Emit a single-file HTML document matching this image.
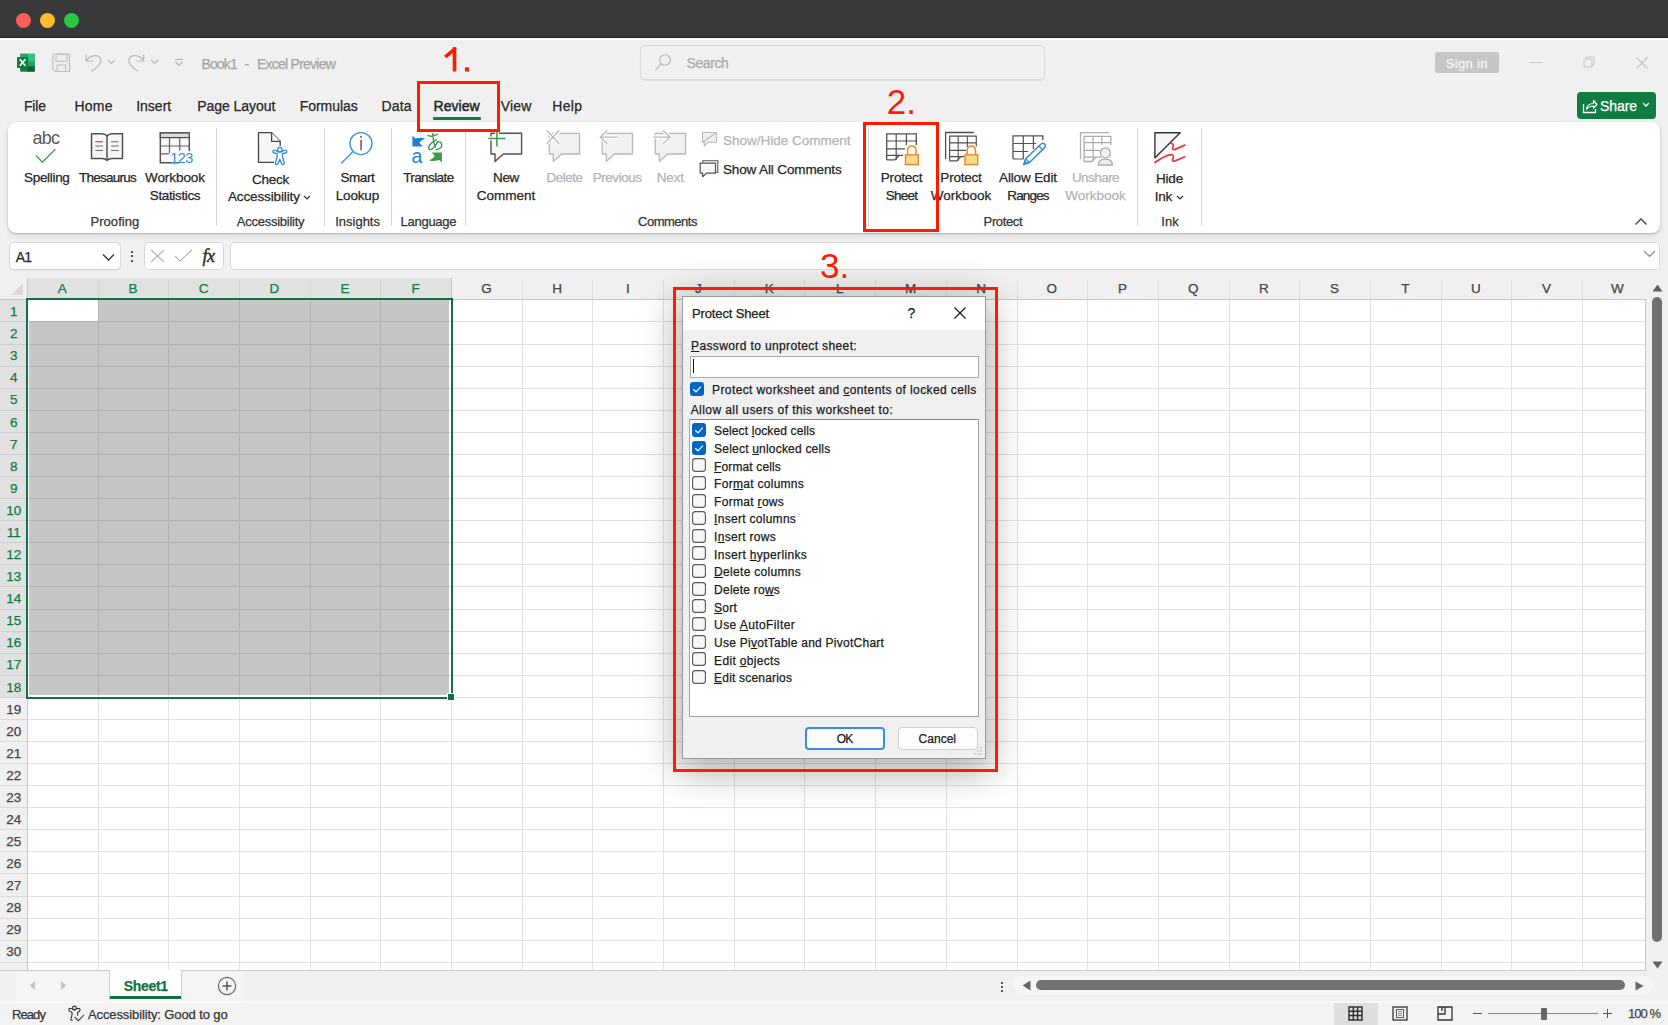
<!DOCTYPE html><html><head><meta charset="utf-8"><style>
html,body{margin:0;padding:0}
body{width:1668px;height:1025px;overflow:hidden;background:#f0f0f0;position:relative;font-family:"Liberation Sans",sans-serif;color:#262626}
.a{position:absolute}
.t{position:absolute;white-space:nowrap;line-height:1;-webkit-text-stroke:0.25px currentColor}
u{text-decoration:underline;text-underline-offset:1px}
</style></head><body>
<div class="a" style="left:0px;top:0px;width:1668px;height:38px;background:#38393b"></div>
<div class="a" style="left:0px;top:36.5px;width:1668px;height:1.5px;background:#222325"></div>
<div class="a" style="left:0px;top:38px;width:1668px;height:1.5px;background:#fcfcfc"></div>
<div class="a" style="left:15.5px;top:13.0px;width:15px;height:15px;background:#fe5f57;border-radius:50%"></div>
<div class="a" style="left:39.5px;top:13.0px;width:15px;height:15px;background:#febc2e;border-radius:50%"></div>
<div class="a" style="left:63.5px;top:13.0px;width:15px;height:15px;background:#28c840;border-radius:50%"></div>
<svg class="a" style="left:16px;top:53px;" width="20" height="20" viewBox="0 0 20 20">
<rect x="4.3" y="0.8" width="14.4" height="17.7" rx="0.8" fill="#1d8f56"/>
<rect x="11.5" y="0.8" width="7.2" height="8" fill="#33c481"/>
<rect x="4.3" y="0.8" width="7.2" height="4" fill="#21a366"/>
<rect x="11.5" y="8.8" width="7.2" height="5" fill="#21a366"/>
<rect x="4.3" y="13.5" width="14.4" height="5" rx="0.8" fill="#107c41"/>
<rect x="11.5" y="13.5" width="7.2" height="5" fill="#185c37"/>
<rect x="1" y="3.9" width="11.2" height="11.2" rx="0.9" fill="#107c41"/>
<path d="M3.8 6.3 L9.4 12.8 M9.4 6.3 L3.8 12.8" stroke="#fff" stroke-width="1.7"/>
</svg>
<svg class="a" style="left:52px;top:53px;" width="19" height="20" viewBox="0 0 19 20">
<path d="M0.8 1 H17.5 V18.5 H3.5 L0.8 15.8 Z" fill="none" stroke="#c0c0c0" stroke-width="1.2" stroke-linejoin="round"/>
<rect x="4" y="1" width="11" height="7.2" fill="none" stroke="#c0c0c0" stroke-width="1.1"/>
<rect x="5.2" y="12" width="8.4" height="6.5" fill="none" stroke="#c0c0c0" stroke-width="1.1"/>
</svg>
<svg class="a" style="left:85px;top:54px;" width="18" height="19" viewBox="0 0 18 19">
<path d="M1.1 0.2 V7 H8" fill="none" stroke="#b8b8b8" stroke-width="1.2"/>
<path d="M1.4 6.6 C5 1 15.9 -1 15.9 7 C15.9 10.5 13 13 6.2 17.4" fill="none" stroke="#b8b8b8" stroke-width="1.2"/>
</svg>
<svg class="a" style="left:107px;top:59px;" width="9" height="6" viewBox="0 0 9 6"><path d="M1 1 L4.5 4.5 L8 1" fill="none" stroke="#b8b8b8" stroke-width="1.1"/></svg>
<svg class="a" style="left:128px;top:54px;" width="18" height="19" viewBox="0 0 18 19">
<path d="M15.7 0.2 V7 H8.5" fill="none" stroke="#b8b8b8" stroke-width="1.2"/>
<path d="M15.4 6.6 C12 1 0.8 -1 0.8 7 C0.8 10.5 3.5 13 9.9 17.2" fill="none" stroke="#b8b8b8" stroke-width="1.2"/>
</svg>
<svg class="a" style="left:150px;top:59px;" width="9" height="6" viewBox="0 0 9 6"><path d="M1 1 L4.5 4.5 L8 1" fill="none" stroke="#b8b8b8" stroke-width="1.1"/></svg>
<svg class="a" style="left:174px;top:58px;" width="10" height="9" viewBox="0 0 10 9"><path d="M1 1.5 H9" stroke="#b4b4b4" stroke-width="1.1"/><path d="M1.5 4 L5 7.5 L8.5 4" fill="none" stroke="#b4b4b4" stroke-width="1.1"/></svg>
<div class="t" style="left:201.50px;top:56.65px;font-size:14px;color:#a4a4a4;letter-spacing:-0.878px;">Book1</div>
<div class="t" style="left:244.50px;top:56.65px;font-size:14px;color:#a4a4a4;">-</div>
<div class="t" style="left:257.00px;top:56.65px;font-size:14px;color:#a4a4a4;letter-spacing:-0.762px;">Excel Preview</div>
<div class="a" style="left:640px;top:45px;width:405px;height:35px;box-sizing:border-box;border:1px solid #d9d9d9;border-radius:5px;background:#f0f0f0;box-shadow:0 1px 1px rgba(0,0,0,0.08)"></div>
<svg class="a" style="left:654px;top:53px;" width="18" height="19" viewBox="0 0 18 19"><circle cx="11" cy="7" r="5.3" fill="none" stroke="#b8b8b8" stroke-width="1.1"/><path d="M7.2 10.8 L1.5 16.8" stroke="#b8b8b8" stroke-width="1.2"/></svg>
<div class="t" style="left:686.50px;top:56.15px;font-size:14px;color:#a9a9a9;letter-spacing:-0.391px;">Search</div>
<div class="a" style="left:1435px;top:52px;width:64px;height:21px;background:#c6c6c6;border-radius:2px"></div>
<div class="t" style="left:1445.80px;top:56.50px;font-size:13px;color:#f4f4f4;letter-spacing:0.319px;">Sign in</div>
<div class="a" style="left:1530px;top:62px;width:12px;height:1px;background:#c4c4c4"></div>
<svg class="a" style="left:1583px;top:56px;" width="13" height="13" viewBox="0 0 13 13"><rect x="1" y="3" width="8" height="8" rx="1" fill="none" stroke="#c4c4c4" stroke-width="1"/><path d="M3 3 V1.5 Q3 1 3.5 1 H10.5 Q11 1 11 1.5 V8.5 Q11 9 10.5 9 H9" fill="none" stroke="#c4c4c4" stroke-width="1"/></svg>
<svg class="a" style="left:1636px;top:57px;" width="12" height="12" viewBox="0 0 12 12"><path d="M0.5 0.5 L11.5 11.5 M11.5 0.5 L0.5 11.5" stroke="#c4c4c4" stroke-width="1.1"/></svg>
<div class="t" style="left:23.90px;top:99.25px;font-size:14px;color:#262626;letter-spacing:-0.137px;">File</div>
<div class="t" style="left:74.60px;top:99.25px;font-size:14px;color:#262626;letter-spacing:0.168px;">Home</div>
<div class="t" style="left:136.20px;top:99.25px;font-size:14px;color:#262626;">Insert</div>
<div class="t" style="left:197.30px;top:99.25px;font-size:14px;color:#262626;letter-spacing:-0.054px;">Page Layout</div>
<div class="t" style="left:299.70px;top:99.25px;font-size:14px;color:#262626;letter-spacing:-0.039px;">Formulas</div>
<div class="t" style="left:381.60px;top:99.25px;font-size:14px;color:#262626;letter-spacing:0.109px;">Data</div>
<div class="t" style="left:500.70px;top:99.25px;font-size:14px;color:#262626;letter-spacing:0.227px;">View</div>
<div class="t" style="left:552.30px;top:99.25px;font-size:14px;color:#262626;letter-spacing:0.305px;">Help</div>
<div class="t" style="left:433.60px;top:99.25px;font-size:14px;color:#262626;letter-spacing:0.018px;-webkit-text-stroke:0.45px #262626;">Review</div>
<div class="a" style="left:433px;top:117px;width:48px;height:2.5px;background:#107c41;border-radius:1px"></div>
<div class="a" style="left:1577px;top:92px;width:79px;height:27px;background:#107c41;border-radius:4px"></div>
<svg class="a" style="left:1582px;top:98px;" width="16" height="16" viewBox="0 0 16 16"><path d="M1.5 6 V14.5 H13.5 V11" fill="none" stroke="#fff" stroke-width="1.3"/><path d="M4.5 11.5 C5 7 8 5.5 11.5 5.5 V2.5 L15 6.5 L11.5 10 V8 C8.5 8 6.5 9 4.5 11.5 Z" fill="none" stroke="#fff" stroke-width="1.2" stroke-linejoin="round"/></svg>
<div class="t" style="left:1600.00px;top:99.15px;font-size:14px;color:#ffffff;letter-spacing:-0.069px;">Share</div>
<svg class="a" style="left:1642px;top:102px;" width="8" height="6" viewBox="0 0 8 6"><path d="M1 1 L4 4 L7 1" fill="none" stroke="#fff" stroke-width="1.3"/></svg>
<div class="a" style="left:8px;top:122px;width:1652px;height:111px;background:#fff;border-radius:8px;box-shadow:0 1px 2px rgba(0,0,0,0.2), 0 3px 6px rgba(0,0,0,0.08), 0 0 1px rgba(0,0,0,0.12)"></div>
<div class="a" style="left:216px;top:128px;width:1px;height:98px;background:#d6d6d6"></div>
<div class="a" style="left:324px;top:128px;width:1px;height:98px;background:#d6d6d6"></div>
<div class="a" style="left:391px;top:128px;width:1px;height:98px;background:#d6d6d6"></div>
<div class="a" style="left:465px;top:128px;width:1px;height:98px;background:#d6d6d6"></div>
<div class="a" style="left:868px;top:128px;width:1px;height:98px;background:#d6d6d6"></div>
<div class="a" style="left:1137px;top:128px;width:1px;height:98px;background:#d6d6d6"></div>
<div class="a" style="left:1201px;top:128px;width:1px;height:98px;background:#d6d6d6"></div>
<div class="t" style="left:24.00px;top:171.07px;font-size:13.5px;color:#262626;letter-spacing:-0.308px;">Spelling</div>
<div class="t" style="left:79.10px;top:171.07px;font-size:13.5px;color:#262626;letter-spacing:-0.759px;">Thesaurus</div>
<div class="t" style="left:145.00px;top:171.07px;font-size:13.5px;color:#262626;letter-spacing:-0.068px;">Workbook</div>
<div class="t" style="left:149.80px;top:188.97px;font-size:13.5px;color:#262626;letter-spacing:-0.362px;">Statistics</div>
<div class="t" style="left:252.00px;top:172.57px;font-size:13.5px;color:#262626;letter-spacing:-0.256px;">Check</div>
<div class="t" style="left:227.90px;top:189.87px;font-size:13.5px;color:#262626;letter-spacing:-0.118px;">Accessibility</div>
<svg class="a" style="left:303px;top:195px;" width="8" height="6" viewBox="0 0 8 6"><path d="M1 1 L4 4 L7 1" fill="none" stroke="#333" stroke-width="1.2"/></svg>
<div class="t" style="left:340.40px;top:171.07px;font-size:13.5px;color:#262626;letter-spacing:-0.403px;">Smart</div>
<div class="t" style="left:335.65px;top:188.97px;font-size:13.5px;color:#262626;letter-spacing:-0.138px;">Lookup</div>
<div class="t" style="left:403.15px;top:171.07px;font-size:13.5px;color:#262626;letter-spacing:-0.590px;">Translate</div>
<div class="t" style="left:493.00px;top:171.07px;font-size:13.5px;color:#262626;letter-spacing:-0.339px;">New</div>
<div class="t" style="left:476.70px;top:188.97px;font-size:13.5px;color:#262626;letter-spacing:0.008px;">Comment</div>
<div class="t" style="left:546.50px;top:171.07px;font-size:13.5px;color:#b3b3b3;letter-spacing:-0.508px;">Delete</div>
<div class="t" style="left:592.70px;top:171.07px;font-size:13.5px;color:#b3b3b3;letter-spacing:-0.443px;">Previous</div>
<div class="t" style="left:656.80px;top:171.07px;font-size:13.5px;color:#b3b3b3;letter-spacing:-0.191px;">Next</div>
<div class="t" style="left:722.90px;top:134.37px;font-size:13.5px;color:#b3b3b3;letter-spacing:0.011px;">Show/Hide Comment</div>
<div class="t" style="left:722.90px;top:163.07px;font-size:13.5px;color:#262626;letter-spacing:-0.125px;">Show All Comments</div>
<div class="t" style="left:880.75px;top:171.07px;font-size:13.5px;color:#262626;letter-spacing:-0.183px;">Protect</div>
<div class="t" style="left:885.85px;top:188.97px;font-size:13.5px;color:#262626;letter-spacing:-0.799px;">Sheet</div>
<div class="t" style="left:940.35px;top:171.07px;font-size:13.5px;color:#262626;letter-spacing:-0.212px;">Protect</div>
<div class="t" style="left:930.65px;top:188.97px;font-size:13.5px;color:#262626;letter-spacing:0.019px;">Workbook</div>
<div class="t" style="left:999.00px;top:171.07px;font-size:13.5px;color:#262626;letter-spacing:-0.128px;">Allow Edit</div>
<div class="t" style="left:1007.30px;top:188.97px;font-size:13.5px;color:#262626;letter-spacing:-0.860px;">Ranges</div>
<div class="t" style="left:1071.90px;top:171.07px;font-size:13.5px;color:#b3b3b3;letter-spacing:-0.552px;">Unshare</div>
<div class="t" style="left:1065.25px;top:188.97px;font-size:13.5px;color:#b3b3b3;letter-spacing:-0.006px;">Workbook</div>
<div class="t" style="left:1156.00px;top:171.87px;font-size:13.5px;color:#262626;letter-spacing:-0.195px;">Hide</div>
<div class="t" style="left:1154.80px;top:189.57px;font-size:13.5px;color:#262626;letter-spacing:-0.339px;">Ink</div>
<svg class="a" style="left:1176px;top:195px;" width="8" height="6" viewBox="0 0 8 6"><path d="M1 1 L4 4 L7 1" fill="none" stroke="#333" stroke-width="1.2"/></svg>
<div class="t" style="left:90.40px;top:214.60px;font-size:13px;color:#333;letter-spacing:0.070px;">Proofing</div>
<div class="t" style="left:236.85px;top:214.60px;font-size:13px;color:#333;letter-spacing:-0.255px;">Accessibility</div>
<div class="t" style="left:335.20px;top:214.60px;font-size:13px;color:#333;letter-spacing:-0.002px;">Insights</div>
<div class="t" style="left:400.50px;top:214.60px;font-size:13px;color:#333;letter-spacing:-0.259px;">Language</div>
<div class="t" style="left:638.00px;top:214.60px;font-size:13px;color:#333;letter-spacing:-0.482px;">Comments</div>
<div class="t" style="left:983.60px;top:214.60px;font-size:13px;color:#333;letter-spacing:-0.370px;">Protect</div>
<div class="t" style="left:1161.25px;top:214.60px;font-size:13px;color:#333;letter-spacing:0.052px;">Ink</div>
<svg class="a" style="left:1634px;top:216.5px;" width="14" height="9" viewBox="0 0 14 9"><path d="M1.5 7.5 L7 2 L12.5 7.5" fill="none" stroke="#444" stroke-width="1.4"/></svg>
<div class="t" style="left:32.5px;top:128.5px;font-size:18px;color:#5a5a5a;letter-spacing:-0.8px;-webkit-text-stroke:0">abc</div>
<svg class="a" style="left:33px;top:146px;" width="26" height="19" viewBox="0 0 26 19"><path d="M3 9.5 L9.4 16.2 L22.3 3.3" fill="none" stroke="#45a349" stroke-width="1.4"/></svg>
<svg class="a" style="left:89px;top:131px;" width="36" height="32" viewBox="0 0 36 32">
<path d="M16 6 H11 M22.5 14 " stroke="none"/>
<path d="M2.5 2.8 H13 Q16.5 2.8 18 5 Q19.5 2.8 23 2.8 H33.5 V27.5 H23 Q19.5 27.5 18 29.5 Q16.5 27.5 13 27.5 H2.5 Z" fill="#f6f6f6" stroke="#505050" stroke-width="1.5" stroke-linejoin="round"/>
<path d="M18 5 V29" stroke="#505050" stroke-width="1.5"/>
<path d="M6.4 10.7 H13.9" stroke="#e8353b" stroke-width="1.2"/>
<path d="M6.4 15 H13.9 M6.4 19.5 H13.9 M22 10.7 H29.5 M22 15 H29.5 M22 19.5 H29.5" stroke="#6a6a6a" stroke-width="1.1"/>
</svg>
<svg class="a" style="left:158px;top:131px;" width="36" height="34" viewBox="0 0 36 34">
<path d="M21 31.8 H2.3 V2 H31.3 V20" fill="#fafafa" stroke="#505050" stroke-width="1.4"/>
<rect x="2.3" y="2" width="29" height="4.6" fill="#dcdcdc" stroke="#505050" stroke-width="1.3"/>
<path d="M11.5 6.6 V22 M21.7 6.6 V19.5 M2.3 15 H31.3 M2.3 22.8 H11" stroke="#606060" stroke-width="1.2"/>
<text x="12.3" y="32" font-family="Liberation Sans" font-size="14.5" fill="#2e8fd8" letter-spacing="-0.6">123</text>
</svg>
<svg class="a" style="left:256px;top:131px;" width="34" height="36" viewBox="0 0 34 36">
<path d="M24.2 15 V10.3 L15.6 1.7 H2.5 V31.4 H18" fill="#f6f6f6" stroke="#444" stroke-width="1.3" stroke-linejoin="round"/>
<path d="M15.6 1.7 V10.3 H24.2" fill="#fff" stroke="#444" stroke-width="1.3" stroke-linejoin="round"/>
<path d="M21.2 22.6 L18 22 Q16.2 21.2 17.2 19.6 Q18.2 18.6 20 19.6 L21.6 20.6 Q23.8 21.6 26 20.6 L27.6 19.6 Q29.4 18.6 30.4 19.6 Q31.4 21.2 29.6 22 L26.4 22.6 L26.4 25.4 L28.2 32 Q28.4 33.6 26.9 33.6 Q25.9 33.6 25.5 32.4 L23.8 28.2 L22.1 32.4 Q21.7 33.6 20.7 33.6 Q19.2 33.6 19.4 32 L21.2 25.4 Z" fill="#fff" stroke="#2e8fd8" stroke-width="1.3" stroke-linejoin="round"/>
<circle cx="23.8" cy="18.6" r="2.2" fill="#fff" stroke="#2e8fd8" stroke-width="1.3"/>
</svg>
<svg class="a" style="left:338px;top:129px;" width="38" height="38" viewBox="0 0 38 38">
<circle cx="23" cy="14.6" r="11" fill="#fff" stroke="#3a96dd" stroke-width="1.4"/>
<path d="M15 22.6 L3.2 34.5" stroke="#3a96dd" stroke-width="1.4"/>
<rect x="22.4" y="10.8" width="1.3" height="10.4" fill="#444"/>
<circle cx="23" cy="7.9" r="0.9" fill="#444"/>
</svg>
<svg class="a" style="left:410px;top:131px;" width="36" height="34" viewBox="0 0 36 34">
<path d="M2.4 4.8 L2.4 15.4 L12.8 15.4 Q10.2 13.4 9.4 11.6 Q11 9.2 15.1 7.4 Q10 6.2 5.5 7.6 Z" fill="#1e83d4"/>
<text x="1.6" y="31.8" font-family="Liberation Sans" font-size="19.5" fill="#1e83d4">a</text>
<path d="M21.6 21.4 L31.9 21.4 L31.9 31.8 Q30.5 29.6 29 29 Q24 31 19.2 29.4 Q23.6 27.6 24.7 25.1 Q23.4 22.8 21.6 21.4 Z" fill="#3a9b48"/>
<path d="M17.9 4.2 Q19.5 5.6 22 5 Q25 4.2 27.8 3.4 M22.7 2.5 Q23 10 25.2 16.2 M26.4 8.6 Q19.5 12.5 18.6 16.6 Q18.6 19.6 21.8 18.2 Q25 16.2 27.6 10.6 Q31.8 10.4 31.8 14.2 Q31.6 17.4 26.2 18.8" fill="none" stroke="#3a9b48" stroke-width="1.4" stroke-linecap="round" stroke-linejoin="round"/>
</svg>
<svg class="a" style="left:486px;top:128px;" width="40" height="36" viewBox="0 0 40 36">
<path d="M5 5.3 H35.6 V26 H17.3 L9 33.5 V26 H5 Z" fill="#f8f8f8" stroke="#505050" stroke-width="1.4" stroke-linejoin="round"/>
<path d="M10.9 0.8 V19 M2 10.4 H19.6" stroke="#fff" stroke-width="4"/>
<path d="M10.9 1.2 V18.5 M2.3 10.4 H19.5" stroke="#3a9b48" stroke-width="1.5"/>
</svg>
<svg class="a" style="left:545px;top:128px;" width="42" height="36" viewBox="0 0 42 36"><path d="M4.2 5.3 H34.5 V26 H16.5 L8.3 33.5 V26 H4.2 Z" fill="#f1f1f1" stroke="#b8b8b8" stroke-width="1.3" stroke-linejoin="round"/><path d="M1.5 2.3 L14.4 15.9" stroke="#fff" stroke-width="4"/><path d="M14.4 2.3 L1.5 15.9" stroke="#fff" stroke-width="4"/><path d="M1.8 2.5 L14.2 15.7 M14.2 2.5 L1.8 15.7" stroke="#b8b8b8" stroke-width="1.3"/></svg>
<svg class="a" style="left:598px;top:128px;" width="42" height="36" viewBox="0 0 42 36"><path d="M4.2 5.3 H34.5 V26 H16.5 L8.3 33.5 V26 H4.2 Z" fill="#f1f1f1" stroke="#b8b8b8" stroke-width="1.3" stroke-linejoin="round"/><path d="M2.3 9.1 H19.6 M9.2 2.5 L2.3 9.1 L9.2 15.7" fill="none" stroke="#fff" stroke-width="3.5"/><path d="M2.3 9.1 H19.6 M9.2 2.5 L2.3 9.1 L9.2 15.7" fill="none" stroke="#b8b8b8" stroke-width="1.3"/></svg>
<svg class="a" style="left:651px;top:128px;" width="42" height="36" viewBox="0 0 42 36"><path d="M4.2 5.3 H34.5 V26 H16.5 L8.3 33.5 V26 H4.2 Z" fill="#f1f1f1" stroke="#b8b8b8" stroke-width="1.3" stroke-linejoin="round"/><path d="M2.4 9.1 H19 M12 2.5 L19 9.1 L12 15.7" fill="none" stroke="#fff" stroke-width="3.5"/><path d="M2.4 9.1 H19 M12 2.5 L19 9.1 L12 15.7" fill="none" stroke="#b8b8b8" stroke-width="1.3"/></svg>
<svg class="a" style="left:700px;top:130px;" width="20" height="20" viewBox="0 0 20 20"><path d="M2.5 2.5 H16.5 V12.3 H8 L4.3 16.2 V12.3 H2.5 Z" fill="#f1f1f1" stroke="#b8b8b8" stroke-width="1.1" stroke-linejoin="round"/><path d="M3 12 L16 2.8" stroke="#b8b8b8" stroke-width="1.1"/></svg>
<svg class="a" style="left:698px;top:158px;" width="22" height="21" viewBox="0 0 22 21"><path d="M4.8 4.2 V2.8 H19.8 V14.5 H18.4" fill="none" stroke="#505050" stroke-width="1.1"/><path d="M2.2 5.1 H17.5 V15.1 H8.6 L4.6 18.7 V15.1 H2.2 Z" fill="#f8f8f8" stroke="#505050" stroke-width="1.2" stroke-linejoin="round"/></svg>
<svg class="a" style="left:885px;top:132px;" width="36" height="35" viewBox="0 0 36 35"><g transform="translate(1,1.2)"><path d="M0.7 26.7 V0.7 H30.3 V11.7" fill="none" stroke="#505050" stroke-width="1.3"/>
<path d="M0.7 7.8 H30.3 M0.7 15.6 H19 M0.7 22.2 H17 M10.2 0.7 V26.7 M20.4 0.7 V12" fill="none" stroke="#505050" stroke-width="1.2"/>
<path d="M0.7 26.7 H8.8 L12.8 22.5" fill="none" stroke="#505050" stroke-width="1.3"/></g><path d="M22.6 22.8 V18.9 Q22.6 14.1 26.8 14.1 Q31.0 14.1 31.0 18.9 V22.8" fill="none" stroke="#e8892b" stroke-width="1.5"/>
<rect x="20.5" y="22.8" width="12.8" height="9.8" fill="#f7d98b" stroke="#e8892b" stroke-width="1.4"/></svg>
<svg class="a" style="left:944px;top:131px;" width="36" height="36" viewBox="0 0 36 36"><path d="M1.6 28 V1.5 H29.8" fill="none" stroke="#505050" stroke-width="1.3"/><g transform="translate(5,4.5) scale(0.9,0.95)"><path d="M0.7 26.7 V0.7 H30.3 V11.7" fill="none" stroke="#505050" stroke-width="1.3"/>
<path d="M0.7 7.8 H30.3 M0.7 15.6 H19 M0.7 22.2 H17 M10.2 0.7 V26.7 M20.4 0.7 V12" fill="none" stroke="#505050" stroke-width="1.2"/>
<path d="M0.7 26.7 H8.8 L12.8 22.5" fill="none" stroke="#505050" stroke-width="1.3"/></g><path d="M23.1 23.8 V19.9 Q23.1 15.1 27.3 15.1 Q31.5 15.1 31.5 19.9 V23.8" fill="none" stroke="#e8892b" stroke-width="1.5"/>
<rect x="21.0" y="23.8" width="12.8" height="9.8" fill="#f7d98b" stroke="#e8892b" stroke-width="1.4"/></svg>
<svg class="a" style="left:1012px;top:134px;" width="36" height="33" viewBox="0 0 36 33"><path d="M1 25 V1.8 H30.8 V6" fill="none" stroke="#505050" stroke-width="1.3"/>
<path d="M1 9.5 H24 M1 17.5 H16 M11.3 1.8 V25 M21.4 1.8 V15 M1 25 H11.5" fill="none" stroke="#505050" stroke-width="1.2"/>
<path d="M28.5 10.5 Q30.8 8.2 32.6 10 Q34.4 11.8 32.1 14.1 L17.5 28.5 L11.6 30.6 L13.7 24.8 Z" fill="#fff" stroke="#2d8fdc" stroke-width="1.5" stroke-linejoin="round"/>
<path d="M27 12.2 L30.5 15.6 M13.7 24.8 L17.5 28.5" stroke="#2d8fdc" stroke-width="1.3"/>
<path d="M11.6 30.6 L13.1 26.4 L15.8 29.1 Z" fill="#2d8fdc"/></svg>
<svg class="a" style="left:1079px;top:131px;" width="38" height="36" viewBox="0 0 38 36"><path d="M1.5 28.3 V1.7 H30" fill="none" stroke="#b0b0b0" stroke-width="1.3"/>
<path d="M5.1 30.5 V5.3 H31.8 V14" fill="#fff" stroke="#aaaaaa" stroke-width="1.3"/>
<path d="M5.1 11.7 H31.8 M5.1 19.3 H21 M5.1 26.1 H22 M14.1 5.3 V30 M22.8 5.3 V14" fill="none" stroke="#aaaaaa" stroke-width="1.2"/>
<path d="M5.1 30.5 H12.8 L16.6 26.5" fill="none" stroke="#aaaaaa" stroke-width="1.3"/>
<circle cx="26.4" cy="21.8" r="5" fill="#f0f0f0" stroke="#aaaaaa" stroke-width="1.3"/>
<path d="M19.2 34 Q20 28.2 26.4 28.2 Q32.8 28.2 33.6 34 Z" fill="#f0f0f0" stroke="#aaaaaa" stroke-width="1.3"/></svg>
<svg class="a" style="left:1152px;top:131px;" width="36" height="34" viewBox="0 0 36 34"><path d="M2.9 1.7 H28.2 L2.9 27 Z" fill="#f5f5f5" stroke="#333" stroke-width="1.4" stroke-linejoin="round"/>
<path d="M2.9 31.5 Q12 25 18.8 23.6 Q22.6 23.6 20.8 28.2 Q19.6 30.8 22.8 30 L32.7 25.7" fill="none" stroke="#e8353b" stroke-width="1.7" stroke-linecap="round" stroke-linejoin="round"/>
<path d="M18.3 12.2 Q22.4 12.4 21 15.8 Q19.4 19.2 22.6 18.6 L32.7 14.1" fill="none" stroke="#e8353b" stroke-width="1.7" stroke-linecap="round" stroke-linejoin="round"/></svg>
<div class="a" style="left:8.5px;top:242px;width:112px;height:28px;box-sizing:border-box;border:1px solid #d8d8d8;border-radius:5px;background:#fff;box-shadow:0 0.5px 1px rgba(0,0,0,0.06)"></div>
<div class="t" style="left:15.70px;top:249.65px;font-size:14px;color:#262626;letter-spacing:-0.812px;">A1</div>
<svg class="a" style="left:102px;top:253px;" width="13" height="9" viewBox="0 0 13 9"><path d="M1 1.5 L6.5 7 L12 1.5" fill="none" stroke="#333" stroke-width="1.3"/></svg>
<div class="a" style="left:130.8px;top:250.5px;width:2.4px;height:2.4px;background:#222;border-radius:50%"></div>
<div class="a" style="left:130.8px;top:255.0px;width:2.4px;height:2.4px;background:#222;border-radius:50%"></div>
<div class="a" style="left:130.8px;top:259.5px;width:2.4px;height:2.4px;background:#222;border-radius:50%"></div>
<div class="a" style="left:144px;top:242px;width:80px;height:28px;box-sizing:border-box;border:1px solid #d8d8d8;border-radius:5px;background:#fff"></div>
<svg class="a" style="left:150px;top:249px;" width="15" height="14" viewBox="0 0 15 14"><path d="M1 1 L14 13 M14 1 L1 13" stroke="#b0b0b0" stroke-width="1.1"/></svg>
<svg class="a" style="left:174px;top:249px;" width="19" height="13" viewBox="0 0 19 13"><path d="M1 7 L6 12 L18 1" fill="none" stroke="#b0b0b0" stroke-width="1.1"/></svg>
<div class="t" style="left:202.50px;top:246.76px;font-size:18px;color:#333;font-family:'Liberation Serif',serif;-webkit-text-stroke:0.5px #333;letter-spacing:-0.5px"><i>fx</i></div>
<div class="a" style="left:230px;top:242px;width:1430px;height:28px;box-sizing:border-box;border:1px solid #d8d8d8;border-radius:5px;background:#fff"></div>
<svg class="a" style="left:1643px;top:250px;" width="13" height="8" viewBox="0 0 13 8"><path d="M1 1 L6.5 6.5 L12 1" fill="none" stroke="#888" stroke-width="1.2"/></svg>
<div class="a" style="left:27px;top:299px;width:1618px;height:671.5px;background:#fff"></div>
<div class="a" style="left:0px;top:278px;width:1646px;height:21px;background:#f0f0f0"></div>
<div class="a" style="left:27px;top:278px;width:424px;height:21px;background:#e1e1e1"></div>
<div class="a" style="left:0px;top:299px;width:27px;height:398px;background:#e1e1e1"></div>
<svg class="a" style="left:11px;top:283px;" width="13" height="13" viewBox="0 0 13 13"><path d="M12 0 V12 H0 Z" fill="#d9d9d9"/></svg>
<div class="a" style="left:27px;top:321px;width:1618px;height:1px;background:#e1e1e1"></div>
<div class="a" style="left:0px;top:321px;width:27px;height:1px;background:#cfcfcf"></div>
<div class="a" style="left:27px;top:344px;width:1618px;height:1px;background:#e1e1e1"></div>
<div class="a" style="left:0px;top:344px;width:27px;height:1px;background:#cfcfcf"></div>
<div class="a" style="left:27px;top:366px;width:1618px;height:1px;background:#e1e1e1"></div>
<div class="a" style="left:0px;top:366px;width:27px;height:1px;background:#cfcfcf"></div>
<div class="a" style="left:27px;top:388px;width:1618px;height:1px;background:#e1e1e1"></div>
<div class="a" style="left:0px;top:388px;width:27px;height:1px;background:#cfcfcf"></div>
<div class="a" style="left:27px;top:410px;width:1618px;height:1px;background:#e1e1e1"></div>
<div class="a" style="left:0px;top:410px;width:27px;height:1px;background:#cfcfcf"></div>
<div class="a" style="left:27px;top:432px;width:1618px;height:1px;background:#e1e1e1"></div>
<div class="a" style="left:0px;top:432px;width:27px;height:1px;background:#cfcfcf"></div>
<div class="a" style="left:27px;top:454px;width:1618px;height:1px;background:#e1e1e1"></div>
<div class="a" style="left:0px;top:454px;width:27px;height:1px;background:#cfcfcf"></div>
<div class="a" style="left:27px;top:476px;width:1618px;height:1px;background:#e1e1e1"></div>
<div class="a" style="left:0px;top:476px;width:27px;height:1px;background:#cfcfcf"></div>
<div class="a" style="left:27px;top:498px;width:1618px;height:1px;background:#e1e1e1"></div>
<div class="a" style="left:0px;top:498px;width:27px;height:1px;background:#cfcfcf"></div>
<div class="a" style="left:27px;top:520px;width:1618px;height:1px;background:#e1e1e1"></div>
<div class="a" style="left:0px;top:520px;width:27px;height:1px;background:#cfcfcf"></div>
<div class="a" style="left:27px;top:542px;width:1618px;height:1px;background:#e1e1e1"></div>
<div class="a" style="left:0px;top:542px;width:27px;height:1px;background:#cfcfcf"></div>
<div class="a" style="left:27px;top:564px;width:1618px;height:1px;background:#e1e1e1"></div>
<div class="a" style="left:0px;top:564px;width:27px;height:1px;background:#cfcfcf"></div>
<div class="a" style="left:27px;top:586px;width:1618px;height:1px;background:#e1e1e1"></div>
<div class="a" style="left:0px;top:586px;width:27px;height:1px;background:#cfcfcf"></div>
<div class="a" style="left:27px;top:609px;width:1618px;height:1px;background:#e1e1e1"></div>
<div class="a" style="left:0px;top:609px;width:27px;height:1px;background:#cfcfcf"></div>
<div class="a" style="left:27px;top:631px;width:1618px;height:1px;background:#e1e1e1"></div>
<div class="a" style="left:0px;top:631px;width:27px;height:1px;background:#cfcfcf"></div>
<div class="a" style="left:27px;top:653px;width:1618px;height:1px;background:#e1e1e1"></div>
<div class="a" style="left:0px;top:653px;width:27px;height:1px;background:#cfcfcf"></div>
<div class="a" style="left:27px;top:675px;width:1618px;height:1px;background:#e1e1e1"></div>
<div class="a" style="left:0px;top:675px;width:27px;height:1px;background:#cfcfcf"></div>
<div class="a" style="left:27px;top:697px;width:1618px;height:1px;background:#e1e1e1"></div>
<div class="a" style="left:0px;top:697px;width:27px;height:1px;background:#cfcfcf"></div>
<div class="a" style="left:27px;top:719px;width:1618px;height:1px;background:#e1e1e1"></div>
<div class="a" style="left:0px;top:719px;width:27px;height:1px;background:#dadada"></div>
<div class="a" style="left:27px;top:741px;width:1618px;height:1px;background:#e1e1e1"></div>
<div class="a" style="left:0px;top:741px;width:27px;height:1px;background:#dadada"></div>
<div class="a" style="left:27px;top:763px;width:1618px;height:1px;background:#e1e1e1"></div>
<div class="a" style="left:0px;top:763px;width:27px;height:1px;background:#dadada"></div>
<div class="a" style="left:27px;top:785px;width:1618px;height:1px;background:#e1e1e1"></div>
<div class="a" style="left:0px;top:785px;width:27px;height:1px;background:#dadada"></div>
<div class="a" style="left:27px;top:807px;width:1618px;height:1px;background:#e1e1e1"></div>
<div class="a" style="left:0px;top:807px;width:27px;height:1px;background:#dadada"></div>
<div class="a" style="left:27px;top:829px;width:1618px;height:1px;background:#e1e1e1"></div>
<div class="a" style="left:0px;top:829px;width:27px;height:1px;background:#dadada"></div>
<div class="a" style="left:27px;top:851px;width:1618px;height:1px;background:#e1e1e1"></div>
<div class="a" style="left:0px;top:851px;width:27px;height:1px;background:#dadada"></div>
<div class="a" style="left:27px;top:873px;width:1618px;height:1px;background:#e1e1e1"></div>
<div class="a" style="left:0px;top:873px;width:27px;height:1px;background:#dadada"></div>
<div class="a" style="left:27px;top:896px;width:1618px;height:1px;background:#e1e1e1"></div>
<div class="a" style="left:0px;top:896px;width:27px;height:1px;background:#dadada"></div>
<div class="a" style="left:27px;top:918px;width:1618px;height:1px;background:#e1e1e1"></div>
<div class="a" style="left:0px;top:918px;width:27px;height:1px;background:#dadada"></div>
<div class="a" style="left:27px;top:940px;width:1618px;height:1px;background:#e1e1e1"></div>
<div class="a" style="left:0px;top:940px;width:27px;height:1px;background:#dadada"></div>
<div class="a" style="left:27px;top:962px;width:1618px;height:1px;background:#e1e1e1"></div>
<div class="a" style="left:0px;top:962px;width:27px;height:1px;background:#dadada"></div>
<div class="a" style="left:98px;top:299px;width:1px;height:671.5px;background:#e1e1e1"></div>
<div class="a" style="left:98px;top:280px;width:1px;height:19px;background:#d4d4d4"></div>
<div class="a" style="left:168px;top:299px;width:1px;height:671.5px;background:#e1e1e1"></div>
<div class="a" style="left:168px;top:280px;width:1px;height:19px;background:#d4d4d4"></div>
<div class="a" style="left:239px;top:299px;width:1px;height:671.5px;background:#e1e1e1"></div>
<div class="a" style="left:239px;top:280px;width:1px;height:19px;background:#d4d4d4"></div>
<div class="a" style="left:310px;top:299px;width:1px;height:671.5px;background:#e1e1e1"></div>
<div class="a" style="left:310px;top:280px;width:1px;height:19px;background:#d4d4d4"></div>
<div class="a" style="left:380px;top:299px;width:1px;height:671.5px;background:#e1e1e1"></div>
<div class="a" style="left:380px;top:280px;width:1px;height:19px;background:#d4d4d4"></div>
<div class="a" style="left:451px;top:299px;width:1px;height:671.5px;background:#e1e1e1"></div>
<div class="a" style="left:451px;top:278px;width:1px;height:21px;background:#c2c2c2"></div>
<div class="a" style="left:522px;top:299px;width:1px;height:671.5px;background:#e1e1e1"></div>
<div class="a" style="left:522px;top:280px;width:1px;height:19px;background:#dedede"></div>
<div class="a" style="left:592px;top:299px;width:1px;height:671.5px;background:#e1e1e1"></div>
<div class="a" style="left:592px;top:280px;width:1px;height:19px;background:#dedede"></div>
<div class="a" style="left:663px;top:299px;width:1px;height:671.5px;background:#e1e1e1"></div>
<div class="a" style="left:663px;top:280px;width:1px;height:19px;background:#dedede"></div>
<div class="a" style="left:734px;top:299px;width:1px;height:671.5px;background:#e1e1e1"></div>
<div class="a" style="left:734px;top:280px;width:1px;height:19px;background:#dedede"></div>
<div class="a" style="left:804px;top:299px;width:1px;height:671.5px;background:#e1e1e1"></div>
<div class="a" style="left:804px;top:280px;width:1px;height:19px;background:#dedede"></div>
<div class="a" style="left:875px;top:299px;width:1px;height:671.5px;background:#e1e1e1"></div>
<div class="a" style="left:875px;top:280px;width:1px;height:19px;background:#dedede"></div>
<div class="a" style="left:946px;top:299px;width:1px;height:671.5px;background:#e1e1e1"></div>
<div class="a" style="left:946px;top:280px;width:1px;height:19px;background:#dedede"></div>
<div class="a" style="left:1017px;top:299px;width:1px;height:671.5px;background:#e1e1e1"></div>
<div class="a" style="left:1017px;top:280px;width:1px;height:19px;background:#dedede"></div>
<div class="a" style="left:1087px;top:299px;width:1px;height:671.5px;background:#e1e1e1"></div>
<div class="a" style="left:1087px;top:280px;width:1px;height:19px;background:#dedede"></div>
<div class="a" style="left:1158px;top:299px;width:1px;height:671.5px;background:#e1e1e1"></div>
<div class="a" style="left:1158px;top:280px;width:1px;height:19px;background:#dedede"></div>
<div class="a" style="left:1229px;top:299px;width:1px;height:671.5px;background:#e1e1e1"></div>
<div class="a" style="left:1229px;top:280px;width:1px;height:19px;background:#dedede"></div>
<div class="a" style="left:1299px;top:299px;width:1px;height:671.5px;background:#e1e1e1"></div>
<div class="a" style="left:1299px;top:280px;width:1px;height:19px;background:#dedede"></div>
<div class="a" style="left:1370px;top:299px;width:1px;height:671.5px;background:#e1e1e1"></div>
<div class="a" style="left:1370px;top:280px;width:1px;height:19px;background:#dedede"></div>
<div class="a" style="left:1441px;top:299px;width:1px;height:671.5px;background:#e1e1e1"></div>
<div class="a" style="left:1441px;top:280px;width:1px;height:19px;background:#dedede"></div>
<div class="a" style="left:1511px;top:299px;width:1px;height:671.5px;background:#e1e1e1"></div>
<div class="a" style="left:1511px;top:280px;width:1px;height:19px;background:#dedede"></div>
<div class="a" style="left:1582px;top:299px;width:1px;height:671.5px;background:#e1e1e1"></div>
<div class="a" style="left:1582px;top:280px;width:1px;height:19px;background:#dedede"></div>
<div class="a" style="left:27px;top:278px;width:1px;height:692.5px;background:#c9c9c9"></div>
<div class="a" style="left:0px;top:298.5px;width:1645px;height:1px;background:#c6c6c6"></div>
<div class="a" style="left:1645px;top:299px;width:1px;height:671.5px;background:#c6c6c6"></div>
<div class="a" style="left:29px;top:300px;width:420px;height:395px;background:#c6c6c6"></div>
<div class="a" style="left:29px;top:300px;width:69px;height:21px;background:#fff"></div>
<div class="a" style="left:29px;top:321px;width:420px;height:1px;background:#b0b0b0"></div>
<div class="a" style="left:29px;top:344px;width:420px;height:1px;background:#b0b0b0"></div>
<div class="a" style="left:29px;top:366px;width:420px;height:1px;background:#b0b0b0"></div>
<div class="a" style="left:29px;top:388px;width:420px;height:1px;background:#b0b0b0"></div>
<div class="a" style="left:29px;top:410px;width:420px;height:1px;background:#b0b0b0"></div>
<div class="a" style="left:29px;top:432px;width:420px;height:1px;background:#b0b0b0"></div>
<div class="a" style="left:29px;top:454px;width:420px;height:1px;background:#b0b0b0"></div>
<div class="a" style="left:29px;top:476px;width:420px;height:1px;background:#b0b0b0"></div>
<div class="a" style="left:29px;top:498px;width:420px;height:1px;background:#b0b0b0"></div>
<div class="a" style="left:29px;top:520px;width:420px;height:1px;background:#b0b0b0"></div>
<div class="a" style="left:29px;top:542px;width:420px;height:1px;background:#b0b0b0"></div>
<div class="a" style="left:29px;top:564px;width:420px;height:1px;background:#b0b0b0"></div>
<div class="a" style="left:29px;top:586px;width:420px;height:1px;background:#b0b0b0"></div>
<div class="a" style="left:29px;top:609px;width:420px;height:1px;background:#b0b0b0"></div>
<div class="a" style="left:29px;top:631px;width:420px;height:1px;background:#b0b0b0"></div>
<div class="a" style="left:29px;top:653px;width:420px;height:1px;background:#b0b0b0"></div>
<div class="a" style="left:29px;top:675px;width:420px;height:1px;background:#b0b0b0"></div>
<div class="a" style="left:98px;top:300px;width:1px;height:395px;background:#b0b0b0"></div>
<div class="a" style="left:168px;top:300px;width:1px;height:395px;background:#b0b0b0"></div>
<div class="a" style="left:239px;top:300px;width:1px;height:395px;background:#b0b0b0"></div>
<div class="a" style="left:310px;top:300px;width:1px;height:395px;background:#b0b0b0"></div>
<div class="a" style="left:380px;top:300px;width:1px;height:395px;background:#b0b0b0"></div>
<div class="a" style="left:29px;top:300px;width:69px;height:21px;background:#fff"></div>
<div class="a" style="left:26px;top:298px;width:427px;height:2px;background:#137141"></div>
<div class="a" style="left:26px;top:298px;width:2px;height:401px;background:#137141"></div>
<div class="a" style="left:451px;top:298px;width:2px;height:399px;background:#137141"></div>
<div class="a" style="left:26px;top:697px;width:423px;height:2px;background:#137141"></div>
<div class="a" style="left:448px;top:694px;width:6px;height:6px;background:#137141;outline:1px solid #fff"></div>
<div class="t" style="left:57.84px;top:282.07px;font-size:13.5px;color:#107c41;">A</div>
<div class="t" style="left:128.52px;top:282.07px;font-size:13.5px;color:#107c41;">B</div>
<div class="t" style="left:198.83px;top:282.07px;font-size:13.5px;color:#107c41;">C</div>
<div class="t" style="left:269.50px;top:282.07px;font-size:13.5px;color:#107c41;">D</div>
<div class="t" style="left:340.56px;top:282.07px;font-size:13.5px;color:#107c41;">E</div>
<div class="t" style="left:411.62px;top:282.07px;font-size:13.5px;color:#107c41;">F</div>
<div class="t" style="left:481.17px;top:282.07px;font-size:13.5px;color:#444;">G</div>
<div class="t" style="left:552.23px;top:282.07px;font-size:13.5px;color:#444;">H</div>
<div class="t" style="left:625.91px;top:282.07px;font-size:13.5px;color:#444;">I</div>
<div class="t" style="left:695.09px;top:282.07px;font-size:13.5px;color:#444;">J</div>
<div class="t" style="left:764.64px;top:282.07px;font-size:13.5px;color:#444;">K</div>
<div class="t" style="left:836.06px;top:282.07px;font-size:13.5px;color:#444;">L</div>
<div class="t" style="left:904.88px;top:282.07px;font-size:13.5px;color:#444;">M</div>
<div class="t" style="left:976.31px;top:282.07px;font-size:13.5px;color:#444;">N</div>
<div class="t" style="left:1046.61px;top:282.07px;font-size:13.5px;color:#444;">O</div>
<div class="t" style="left:1118.04px;top:282.07px;font-size:13.5px;color:#444;">P</div>
<div class="t" style="left:1187.97px;top:282.07px;font-size:13.5px;color:#444;">Q</div>
<div class="t" style="left:1259.03px;top:282.07px;font-size:13.5px;color:#444;">R</div>
<div class="t" style="left:1330.08px;top:282.07px;font-size:13.5px;color:#444;">S</div>
<div class="t" style="left:1401.14px;top:282.07px;font-size:13.5px;color:#444;">T</div>
<div class="t" style="left:1471.07px;top:282.07px;font-size:13.5px;color:#444;">U</div>
<div class="t" style="left:1542.12px;top:282.07px;font-size:13.5px;color:#444;">V</div>
<div class="t" style="left:1610.93px;top:282.07px;font-size:13.5px;color:#444;">W</div>
<div class="t" style="left:10.04px;top:305.17px;font-size:13.5px;color:#107c41;">1</div>
<div class="t" style="left:10.04px;top:327.25px;font-size:13.5px;color:#107c41;">2</div>
<div class="t" style="left:10.04px;top:349.33px;font-size:13.5px;color:#107c41;">3</div>
<div class="t" style="left:10.04px;top:371.41px;font-size:13.5px;color:#107c41;">4</div>
<div class="t" style="left:10.04px;top:393.49px;font-size:13.5px;color:#107c41;">5</div>
<div class="t" style="left:10.04px;top:415.57px;font-size:13.5px;color:#107c41;">6</div>
<div class="t" style="left:10.04px;top:437.65px;font-size:13.5px;color:#107c41;">7</div>
<div class="t" style="left:10.04px;top:459.73px;font-size:13.5px;color:#107c41;">8</div>
<div class="t" style="left:10.04px;top:481.81px;font-size:13.5px;color:#107c41;">9</div>
<div class="t" style="left:6.28px;top:503.89px;font-size:13.5px;color:#107c41;">10</div>
<div class="t" style="left:6.78px;top:525.97px;font-size:13.5px;color:#107c41;">11</div>
<div class="t" style="left:6.28px;top:548.05px;font-size:13.5px;color:#107c41;">12</div>
<div class="t" style="left:6.28px;top:570.13px;font-size:13.5px;color:#107c41;">13</div>
<div class="t" style="left:6.28px;top:592.21px;font-size:13.5px;color:#107c41;">14</div>
<div class="t" style="left:6.28px;top:614.29px;font-size:13.5px;color:#107c41;">15</div>
<div class="t" style="left:6.28px;top:636.37px;font-size:13.5px;color:#107c41;">16</div>
<div class="t" style="left:6.28px;top:658.45px;font-size:13.5px;color:#107c41;">17</div>
<div class="t" style="left:6.28px;top:680.53px;font-size:13.5px;color:#107c41;">18</div>
<div class="t" style="left:6.28px;top:702.61px;font-size:13.5px;color:#444;">19</div>
<div class="t" style="left:6.28px;top:724.69px;font-size:13.5px;color:#444;">20</div>
<div class="t" style="left:6.28px;top:746.77px;font-size:13.5px;color:#444;">21</div>
<div class="t" style="left:6.28px;top:768.85px;font-size:13.5px;color:#444;">22</div>
<div class="t" style="left:6.28px;top:790.93px;font-size:13.5px;color:#444;">23</div>
<div class="t" style="left:6.28px;top:813.01px;font-size:13.5px;color:#444;">24</div>
<div class="t" style="left:6.28px;top:835.09px;font-size:13.5px;color:#444;">25</div>
<div class="t" style="left:6.28px;top:857.17px;font-size:13.5px;color:#444;">26</div>
<div class="t" style="left:6.28px;top:879.25px;font-size:13.5px;color:#444;">27</div>
<div class="t" style="left:6.28px;top:901.33px;font-size:13.5px;color:#444;">28</div>
<div class="t" style="left:6.28px;top:923.41px;font-size:13.5px;color:#444;">29</div>
<div class="t" style="left:6.28px;top:945.49px;font-size:13.5px;color:#444;">30</div>
<div class="a" style="left:0;top:963px;width:27px;height:8px;overflow:hidden"><div class="t" style="left:6px;top:4.6px;font-size:13.5px;color:#444">31</div></div>
<div class="a" style="left:1646px;top:279px;width:22px;height:692px;background:#f0f0f0"></div>
<svg class="a" style="left:1652px;top:284px;" width="11" height="8" viewBox="0 0 11 8"><path d="M0.5 7.5 L5.5 0.5 L10.5 7.5 Z" fill="#606060"/></svg>
<div class="a" style="left:1652px;top:297px;width:10px;height:645px;background:#707070;border-radius:5px"></div>
<svg class="a" style="left:1652px;top:961px;" width="11" height="8" viewBox="0 0 11 8"><path d="M0.5 0.5 L5.5 7.5 L10.5 0.5 Z" fill="#606060"/></svg>
<div class="a" style="left:0px;top:970px;width:1646px;height:1.5px;background:#c8c8c8"></div>
<div class="a" style="left:0px;top:971px;width:1668px;height:30px;background:#f0f0f0"></div>
<div class="a" style="left:16px;top:972px;width:227px;height:29px;background:#f5f5f5"></div>
<svg class="a" style="left:28px;top:980px;" width="8" height="11" viewBox="0 0 8 11"><path d="M7 1 L1.5 5.5 L7 10 Z" fill="#c4c4c4"/></svg>
<svg class="a" style="left:60px;top:980px;" width="8" height="11" viewBox="0 0 8 11"><path d="M1 1 L6.5 5.5 L1 10 Z" fill="#c4c4c4"/></svg>
<div class="a" style="left:110px;top:970px;width:71px;height:30px;background:#fff;box-shadow:1px 0 0 #d0d0d0, -1px 0 0 #d0d0d0"></div>
<div class="a" style="left:110px;top:996px;width:71px;height:2.5px;background:#137141"></div>
<div class="t" style="left:123.70px;top:978.65px;font-size:14px;color:#137141;letter-spacing:-0.315px;font-weight:bold;">Sheet1</div>
<svg class="a" style="left:217px;top:976px;" width="20" height="20" viewBox="0 0 20 20"><circle cx="10" cy="10" r="8.6" fill="none" stroke="#666" stroke-width="1.2"/><path d="M10 5.5 V14.5 M5.5 10 H14.5" stroke="#555" stroke-width="1.5"/></svg>
<div class="a" style="left:1000.9px;top:981.9px;width:2.3px;height:2.3px;background:#222;border-radius:50%"></div>
<div class="a" style="left:1000.9px;top:985.9px;width:2.3px;height:2.3px;background:#222;border-radius:50%"></div>
<div class="a" style="left:1000.9px;top:989.9px;width:2.3px;height:2.3px;background:#222;border-radius:50%"></div>
<div class="a" style="left:1013px;top:976px;width:640px;height:19px;background:#f5f5f5;border-radius:9px"></div>
<svg class="a" style="left:1022px;top:980px;" width="9" height="11" viewBox="0 0 9 11"><path d="M8.5 0.5 L0.5 5.5 L8.5 10.5 Z" fill="#666"/></svg>
<div class="a" style="left:1036px;top:980px;width:589px;height:10px;background:#717171;border-radius:5px"></div>
<svg class="a" style="left:1635px;top:981px;" width="9" height="10" viewBox="0 0 9 10"><path d="M0.5 0.5 L8.5 5 L0.5 9.5 Z" fill="#666"/></svg>
<div class="a" style="left:0px;top:1001px;width:1668px;height:24px;background:#f3f3f3"></div>
<div class="a" style="left:0px;top:1001px;width:1668px;height:2px;background:#f8f8f8"></div>
<div class="t" style="left:12.00px;top:1007.90px;font-size:13px;color:#333;letter-spacing:-0.919px;">Ready</div>
<svg class="a" style="left:66px;top:1003px;" width="20" height="20" viewBox="0 0 20 20"><circle cx="8.4" cy="5" r="1.9" fill="none" stroke="#333" stroke-width="1.1"/><path d="M3.2 7.8 Q2.2 5.6 3.8 5.3 Q5.8 5.5 8.4 7 Q11 5.5 13 5.3 Q14.6 5.6 13.8 7.8 Q13 8.8 11.6 9.2 V12.2 M3.2 7.8 Q4.4 8.8 6 9.3 Q6.4 12 5 15.6 Q4.5 17.2 6.2 17.4" fill="none" stroke="#333" stroke-width="1.1" stroke-linejoin="round" stroke-linecap="round"/><path d="M8.6 14 L12.3 17.7 L18 11.9" fill="none" stroke="#444" stroke-width="1.1"/></svg>
<div class="t" style="left:88.00px;top:1007.50px;font-size:13px;color:#333;letter-spacing:-0.111px;">Accessibility: Good to go</div>
<div class="a" style="left:1334px;top:1003px;width:44px;height:22px;background:#dedede"></div>
<svg class="a" style="left:1348px;top:1006px;" width="15" height="15" viewBox="0 0 15 15"><path d="M1 1 H14 V14 H1 Z M1 5.3 H14 M1 9.6 H14 M5.3 1 V14 M9.6 1 V14" fill="none" stroke="#333" stroke-width="1.5"/></svg>
<svg class="a" style="left:1392px;top:1006px;" width="16" height="15" viewBox="0 0 16 15"><rect x="1" y="1" width="14" height="13" fill="none" stroke="#333" stroke-width="1.3"/><rect x="4.5" y="3.5" width="7" height="8" fill="none" stroke="#555" stroke-width="1"/><path d="M6 5.5 H10 M6 7.5 H10 M6 9.5 H10" stroke="#777" stroke-width="0.8"/></svg>
<svg class="a" style="left:1437px;top:1006px;" width="16" height="15" viewBox="0 0 16 15"><path d="M1 1 H15 V14 H1 Z M1 8 H8 V1 M5 1 V5" fill="none" stroke="#333" stroke-width="1.3"/></svg>
<div class="a" style="left:1473px;top:1012.5px;width:9px;height:1.4px;background:#555"></div>
<div class="a" style="left:1488px;top:1013px;width:110px;height:1.2px;background:#888"></div>
<div class="a" style="left:1541px;top:1008px;width:6px;height:12px;background:#666;border-radius:1px"></div>
<div class="a" style="left:1603px;top:1012.7px;width:9px;height:1.4px;background:#555"></div>
<div class="a" style="left:1606.8px;top:1009px;width:1.4px;height:9px;background:#555"></div>
<div class="t" style="left:1628.00px;top:1007.30px;font-size:13px;color:#444;letter-spacing:-0.975px;">100 %</div>
<div class="a" style="left:682px;top:296px;width:304px;height:463px;box-sizing:border-box;border:1px solid #9a9a9a;background:#f0f0f0;box-shadow:0 8px 34px 6px rgba(0,0,0,0.30)"></div>
<div class="a" style="left:683px;top:297px;width:302px;height:33px;background:#fff"></div>
<div class="t" style="left:692.00px;top:306.70px;font-size:13px;color:#1a1a1a;letter-spacing:-0.137px;">Protect Sheet</div>
<div class="t" style="left:907.40px;top:305.75px;font-size:14px;color:#1a1a1a;">?</div>
<svg class="a" style="left:954px;top:307px;" width="12" height="12" viewBox="0 0 12 12"><path d="M0.5 0.5 L11.5 11.5 M11.5 0.5 L0.5 11.5" stroke="#1a1a1a" stroke-width="1.2"/></svg>
<div class="t" style="left:691.00px;top:339.64px;font-size:12px;color:#1a1a1a;letter-spacing:0.380px;"><u>P</u>assword to unprotect sheet:</div>
<div class="a" style="left:689.5px;top:355.5px;width:289px;height:22px;box-sizing:border-box;border:1px solid #a8a8a8;background:#fff"></div>
<div class="a" style="left:693px;top:359px;width:1.3px;height:14px;background:#111"></div>
<svg class="a" style="left:690px;top:382px;" width="14" height="14" viewBox="0 0 14 14"><rect x="0" y="0" width="14" height="14" rx="3" fill="#0067c0"/><path d="M3.3 7.2 L6 9.8 L10.8 4.6" fill="none" stroke="#fff" stroke-width="1.2"/></svg>
<div class="t" style="left:712.10px;top:383.74px;font-size:12px;color:#1a1a1a;letter-spacing:0.387px;">Protect worksheet and <u>c</u>ontents of locked cells</div>
<div class="t" style="left:690.70px;top:403.54px;font-size:12px;color:#1a1a1a;letter-spacing:0.427px;">Allow all users of this worksheet to:</div>
<div class="a" style="left:689.4px;top:419.3px;width:289.5px;height:297.5px;box-sizing:border-box;border:1px solid #a0a0a0;background:#fff;border-top-color:#888"></div>
<svg class="a" style="left:692px;top:423px;" width="14" height="14" viewBox="0 0 14 14"><rect x="0" y="0" width="14" height="14" rx="3" fill="#0067c0"/><path d="M3.3 7.2 L6 9.8 L10.8 4.6" fill="none" stroke="#fff" stroke-width="1.2"/></svg>
<div class="t" style="left:714.10px;top:425.24px;font-size:12px;color:#1a1a1a;letter-spacing:0.121px;">Select <u>l</u>ocked cells</div>
<svg class="a" style="left:692px;top:441px;" width="14" height="14" viewBox="0 0 14 14"><rect x="0" y="0" width="14" height="14" rx="3" fill="#0067c0"/><path d="M3.3 7.2 L6 9.8 L10.8 4.6" fill="none" stroke="#fff" stroke-width="1.2"/></svg>
<div class="t" style="left:714.10px;top:442.89px;font-size:12px;color:#1a1a1a;letter-spacing:0.203px;">Select <u>u</u>nlocked cells</div>
<svg class="a" style="left:692px;top:458px;" width="14" height="14" viewBox="0 0 14 14"><rect x="0.6" y="0.6" width="12.8" height="12.8" rx="2.6" fill="#f7f7f7" stroke="#5a5a5a" stroke-width="1.1"/></svg>
<div class="t" style="left:714.10px;top:460.54px;font-size:12px;color:#1a1a1a;letter-spacing:0.121px;"><u>F</u>ormat cells</div>
<svg class="a" style="left:692px;top:476px;" width="14" height="14" viewBox="0 0 14 14"><rect x="0.6" y="0.6" width="12.8" height="12.8" rx="2.6" fill="#f7f7f7" stroke="#5a5a5a" stroke-width="1.1"/></svg>
<div class="t" style="left:714.10px;top:478.19px;font-size:12px;color:#1a1a1a;letter-spacing:0.285px;">For<u>m</u>at columns</div>
<svg class="a" style="left:692px;top:494px;" width="14" height="14" viewBox="0 0 14 14"><rect x="0.6" y="0.6" width="12.8" height="12.8" rx="2.6" fill="#f7f7f7" stroke="#5a5a5a" stroke-width="1.1"/></svg>
<div class="t" style="left:714.10px;top:495.84px;font-size:12px;color:#1a1a1a;letter-spacing:0.303px;">Format <u>r</u>ows</div>
<svg class="a" style="left:692px;top:511px;" width="14" height="14" viewBox="0 0 14 14"><rect x="0.6" y="0.6" width="12.8" height="12.8" rx="2.6" fill="#f7f7f7" stroke="#5a5a5a" stroke-width="1.1"/></svg>
<div class="t" style="left:714.10px;top:513.49px;font-size:12px;color:#1a1a1a;letter-spacing:0.285px;"><u>I</u>nsert columns</div>
<svg class="a" style="left:692px;top:529px;" width="14" height="14" viewBox="0 0 14 14"><rect x="0.6" y="0.6" width="12.8" height="12.8" rx="2.6" fill="#f7f7f7" stroke="#5a5a5a" stroke-width="1.1"/></svg>
<div class="t" style="left:714.10px;top:531.14px;font-size:12px;color:#1a1a1a;letter-spacing:0.303px;">I<u>n</u>sert rows</div>
<svg class="a" style="left:692px;top:546px;" width="14" height="14" viewBox="0 0 14 14"><rect x="0.6" y="0.6" width="12.8" height="12.8" rx="2.6" fill="#f7f7f7" stroke="#5a5a5a" stroke-width="1.1"/></svg>
<div class="t" style="left:714.10px;top:548.79px;font-size:12px;color:#1a1a1a;letter-spacing:0.332px;">Insert <u>h</u>yperlinks</div>
<svg class="a" style="left:692px;top:564px;" width="14" height="14" viewBox="0 0 14 14"><rect x="0.6" y="0.6" width="12.8" height="12.8" rx="2.6" fill="#f7f7f7" stroke="#5a5a5a" stroke-width="1.1"/></svg>
<div class="t" style="left:714.10px;top:566.44px;font-size:12px;color:#1a1a1a;letter-spacing:0.307px;"><u>D</u>elete columns</div>
<svg class="a" style="left:692px;top:582px;" width="14" height="14" viewBox="0 0 14 14"><rect x="0.6" y="0.6" width="12.8" height="12.8" rx="2.6" fill="#f7f7f7" stroke="#5a5a5a" stroke-width="1.1"/></svg>
<div class="t" style="left:714.10px;top:584.09px;font-size:12px;color:#1a1a1a;letter-spacing:0.240px;">Delete ro<u>w</u>s</div>
<svg class="a" style="left:692px;top:599px;" width="14" height="14" viewBox="0 0 14 14"><rect x="0.6" y="0.6" width="12.8" height="12.8" rx="2.6" fill="#f7f7f7" stroke="#5a5a5a" stroke-width="1.1"/></svg>
<div class="t" style="left:714.10px;top:601.74px;font-size:12px;color:#1a1a1a;letter-spacing:0.250px;"><u>S</u>ort</div>
<svg class="a" style="left:692px;top:617px;" width="14" height="14" viewBox="0 0 14 14"><rect x="0.6" y="0.6" width="12.8" height="12.8" rx="2.6" fill="#f7f7f7" stroke="#5a5a5a" stroke-width="1.1"/></svg>
<div class="t" style="left:714.10px;top:619.39px;font-size:12px;color:#1a1a1a;letter-spacing:0.403px;">Use <u>A</u>utoFilter</div>
<svg class="a" style="left:692px;top:635px;" width="14" height="14" viewBox="0 0 14 14"><rect x="0.6" y="0.6" width="12.8" height="12.8" rx="2.6" fill="#f7f7f7" stroke="#5a5a5a" stroke-width="1.1"/></svg>
<div class="t" style="left:714.10px;top:637.04px;font-size:12px;color:#1a1a1a;letter-spacing:0.251px;">Use Pi<u>v</u>otTable and PivotChart</div>
<svg class="a" style="left:692px;top:652px;" width="14" height="14" viewBox="0 0 14 14"><rect x="0.6" y="0.6" width="12.8" height="12.8" rx="2.6" fill="#f7f7f7" stroke="#5a5a5a" stroke-width="1.1"/></svg>
<div class="t" style="left:714.10px;top:654.69px;font-size:12px;color:#1a1a1a;letter-spacing:0.332px;">Edit <u>o</u>bjects</div>
<svg class="a" style="left:692px;top:670px;" width="14" height="14" viewBox="0 0 14 14"><rect x="0.6" y="0.6" width="12.8" height="12.8" rx="2.6" fill="#f7f7f7" stroke="#5a5a5a" stroke-width="1.1"/></svg>
<div class="t" style="left:714.10px;top:672.34px;font-size:12px;color:#1a1a1a;letter-spacing:0.189px;"><u>E</u>dit scenarios</div>
<div class="a" style="left:804.5px;top:726.5px;width:80.5px;height:23.5px;box-sizing:border-box;border:2px solid #3a8de0;border-radius:4px;background:#fdfdfd"></div>
<div class="t" style="left:836.70px;top:732.64px;font-size:12px;color:#1a1a1a;letter-spacing:-0.664px;">OK</div>
<div class="a" style="left:897.5px;top:726.5px;width:80px;height:23.5px;box-sizing:border-box;border:1px solid #cfcfcf;border-radius:4px;background:#fdfdfd"></div>
<div class="t" style="left:918.55px;top:732.64px;font-size:12px;color:#1a1a1a;letter-spacing:0.023px;">Cancel</div>
<svg class="a" style="left:974px;top:747px;" width="9" height="9" viewBox="0 0 9 9"><g fill="#b8b8b8"><rect x="6" y="0" width="1.5" height="1.5"/><rect x="3" y="3" width="1.5" height="1.5"/><rect x="6" y="3" width="1.5" height="1.5"/><rect x="0" y="6" width="1.5" height="1.5"/><rect x="3" y="6" width="1.5" height="1.5"/><rect x="6" y="6" width="1.5" height="1.5"/></g></svg>
<div class="a" style="left:417px;top:80.5px;width:83px;height:51.5px;box-sizing:border-box;border:3px solid #ff1a00"></div>
<div class="a" style="left:862.5px;top:121.5px;width:76.5px;height:110.0px;box-sizing:border-box;border:3px solid #ff1a00"></div>
<div class="a" style="left:673px;top:286.5px;width:325px;height:485.5px;box-sizing:border-box;border:3px solid #ff1a00"></div>
<svg class="a" style="left:440px;top:44px;" width="32" height="30" viewBox="0 0 32 30"><path d="M6.6 11.8 L14.2 5.6" stroke="#ff1a00" stroke-width="3.6" stroke-linecap="square"/><rect x="12.7" y="3.2" width="3.6" height="24.3" fill="#ff1a00"/><rect x="25" y="23.3" width="3.9" height="4.2" fill="#ff1a00"/></svg>
<div class="t" style="left:886.80px;top:84.17px;font-size:35px;color:#ff1a00;-webkit-text-stroke:0">2.</div>
<div class="t" style="left:820.00px;top:247.57px;font-size:35px;color:#ff1a00;-webkit-text-stroke:0">3.</div>
</body></html>
